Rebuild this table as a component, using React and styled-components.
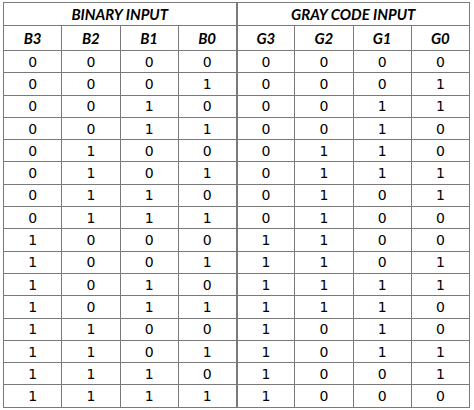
import React from 'react';
import styled, { createGlobalStyle } from 'styled-components';

const GlobalStyle = createGlobalStyle`
    html, body {
        margin: 0;
        padding: 0;
        background: #ffffff;
    }
`;

const Page = styled.div`
    padding: 2px 0 0 3px;
`;

const Table = styled.table`
    width: 467px;
    table-layout: fixed;
    border-collapse: collapse;
    border: 1px solid #7a7a7a;
    color: #000;
`;

const GroupHead = styled.th`
    height: 22px;
    padding: 0;
    border: 1px solid #7a7a7a;
    border-left-width: ${props => (props.$split ? '2px' : '1px')};
    font-family: Lato, 'Open Sans', sans-serif;
    font-style: italic;
    font-weight: 700;
    font-size: 15px;
    text-align: center;
    vertical-align: middle;
`;

const ColHead = styled.th`
    height: 24px;
    padding: 0;
    border: 1px solid #7a7a7a;
    border-left-width: ${props => (props.$split ? '2px' : '1px')};
    font-family: Lato, 'Open Sans', sans-serif;
    font-style: italic;
    font-weight: 700;
    font-size: 15px;
    text-align: center;
`;

const Row = styled.tr`
    height: 22.3px;
`;

const Cell = styled.td`
    padding: 0;
    border: 1px solid #7a7a7a;
    border-left-width: ${props => (props.$split ? '2px' : '1px')};
    font-family: 'DejaVu Sans', Verdana, sans-serif;
    font-size: 14px;
    text-align: center;
    vertical-align: middle;
`;

const toGray = n => {
    const g = n ^ (n >> 1);
    return [3, 2, 1, 0].map(i => (g >> i) & 1);
};

const toBin = n => [3, 2, 1, 0].map(i => (n >> i) & 1);

export default function App() {
    const rows = Array.from({ length: 16 }, (_, n) => [...toBin(n), ...toGray(n)]);
    const heads = ['B3', 'B2', 'B1', 'B0', 'G3', 'G2', 'G1', 'G0'];

    return (
        <Page>
            <GlobalStyle />
            <Table>
                <thead>
                    <tr>
                        <GroupHead colSpan={4}>BINARY INPUT</GroupHead>
                        <GroupHead colSpan={4} $split>GRAY CODE INPUT</GroupHead>
                    </tr>
                    <tr>
                        {heads.map((h, i) => (
                            <ColHead key={h} $split={i === 4}>{h}</ColHead>
                        ))}
                    </tr>
                </thead>
                <tbody>
                    {rows.map((r, n) => (
                        <Row key={n}>
                            {r.map((v, i) => (
                                <Cell key={i} $split={i === 4}>{v}</Cell>
                            ))}
                        </Row>
                    ))}
                </tbody>
            </Table>
        </Page>
    );
}
